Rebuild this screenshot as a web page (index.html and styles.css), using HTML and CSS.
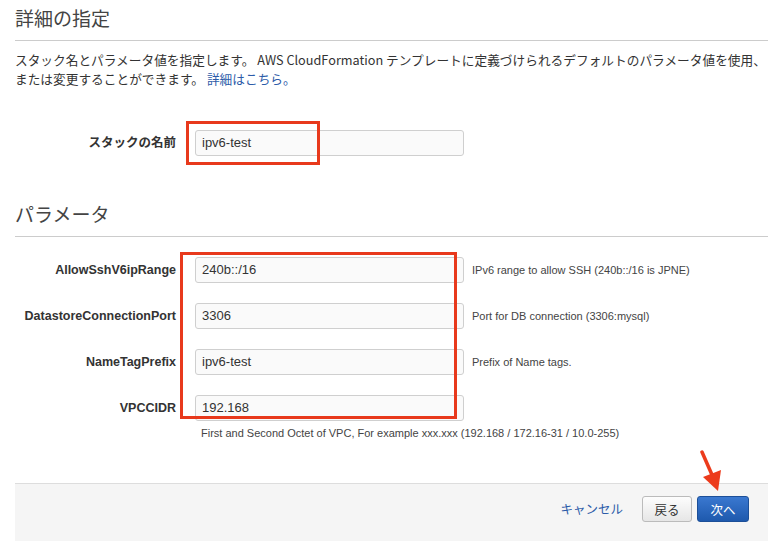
FILE: index.html
```html
<!DOCTYPE html>
<html lang="ja">
<head>
<meta charset="UTF-8">
<title>詳細の指定</title>
<link rel="stylesheet" href="styles.css">
</head>
<body>

<div class="page">

    <!-- 詳細の指定 -->
    <h1 class="section-title">詳細の指定</h1>
    <p class="desc">
        スタック名とパラメータ値を指定します。 AWS CloudFormation テンプレートに定義づけられるデフォルトのパラメータ値を使用、<br>
        または変更することができます。 <a href="#" class="link">詳細はこちら。</a>
    </p>

    <div class="field stack-field">
        <label class="label">スタックの名前</label>
        <input class="input" type="text" value="ipv6-test">
    </div>

    <!-- パラメータ -->
    <h2 class="section-title params-title">パラメータ</h2>

    <div class="params">
        <div class="field">
            <label class="label">AllowSshV6ipRange</label>
            <input class="input" type="text" value="240b::/16">
            <span class="help">IPv6 range to allow SSH (240b::/16 is JPNE)</span>
        </div>
        <div class="field">
            <label class="label">DatastoreConnectionPort</label>
            <input class="input" type="text" value="3306">
            <span class="help">Port for DB connection (3306:mysql)</span>
        </div>
        <div class="field">
            <label class="label">NameTagPrefix</label>
            <input class="input" type="text" value="ipv6-test">
            <span class="help">Prefix of Name tags.</span>
        </div>
        <div class="field">
            <label class="label">VPCCIDR</label>
            <input class="input" type="text" value="192.168">
            <span class="help help-below">First and Second Octet of VPC, For example xxx.xxx (192.168 / 172.16-31 / 10.0-255)</span>
        </div>
    </div>

    <div class="footer">
        <a href="#" class="cancel">キャンセル</a>
        <button class="btn">戻る</button>
        <button class="btn btn-primary">次へ</button>
    </div>

    <!-- 注釈 -->
    <div class="mark mark-stack"></div>
    <div class="mark mark-params"></div>
    <svg class="arrow" width="40" height="50" viewBox="0 0 40 50">
        <line x1="2" y1="2" x2="12.5" y2="26" stroke="#ec3b1c" stroke-width="3.5" stroke-linecap="round"/>
        <polygon points="3,27 21,20 18,41" fill="#ec3b1c"/>
    </svg>

</div>

</body>
</html>
```

FILE: styles.css
```css
body {
    margin: 0;
    font-family: 'Liberation Sans', 'Noto Sans CJK JP', sans-serif;
    background: #fff;
    color: #333;
    overflow: hidden;
}

.page {
    position: relative;
    padding-left: 15px;
    height: 541px;
}

.section-title {
    margin: 0;
    padding: 6px 0 10px;
    font-family: 'Noto Sans CJK JP', sans-serif;
    font-size: 19px;
    font-weight: normal;
    line-height: 24px;
    color: #444;
    border-bottom: 1px solid #ccc;
}

.desc {
    margin: 10px 0 0;
    font-family: 'Noto Sans CJK JP', sans-serif;
    font-size: 12.7px;
    line-height: 18.5px;
    color: #333;
    white-space: nowrap;
}

.link {
    color: #2c5ba8;
    text-decoration: none;
}

.field {
    display: grid;
    grid-template-columns: 161px 269px auto;
    column-gap: 19px;
    align-items: center;
}

.stack-field {
    margin-top: 42px;
}

.params-title {
    margin-top: 40px;
}

.params {
    display: flex;
    flex-direction: column;
    gap: 20px;
    margin-top: 20px;
}

.label {
    text-align: right;
    font-family: 'Liberation Sans', 'Noto Sans CJK JP', sans-serif;
    font-size: 12.5px;
    line-height: 16px;
    font-weight: bold;
    color: #333;
}

.input {
    height: 26px;
    box-sizing: border-box;
    margin: 0;
    padding: 0 6px 2px;
    border: 1px solid #cfcfcf;
    border-radius: 3px;
    background: #fafafa;
    font-family: 'Liberation Sans', sans-serif;
    font-size: 13px;
    color: #333;
}

.help {
    margin-left: -11px;
    font-size: 11px;
    line-height: 15px;
    color: #444;
}

.help-below {
    grid-column: 2 / 4;
    margin: 5px 0 0 6px;
}

.footer {
    display: flex;
    justify-content: flex-end;
    align-items: flex-start;
    gap: 5px;
    margin-top: 42px;
    padding: 12px 19px 0 0;
    height: 70px;
    box-sizing: border-box;
    background: #f5f5f5;
    border-top: 1px solid #ddd;
}

.cancel {
    margin-right: 14px;
    line-height: 26px;
    font-family: 'Noto Sans CJK JP', sans-serif;
    font-size: 12.5px;
    color: #2c5ba8;
    text-decoration: none;
}

.btn {
    height: 26px;
    width: 50px;
    padding: 0;
    border: 1px solid #bbb;
    border-radius: 3px;
    background: linear-gradient(#fdfdfd, #e6e6e6);
    font-family: 'Noto Sans CJK JP', sans-serif;
    font-size: 12.5px;
    color: #333;
}

.btn-primary {
    width: 52px;
    border-color: #1c4f98;
    background: linear-gradient(#3a78d0, #1e59ad);
    color: #fff;
}

.mark {
    position: absolute;
    border: 3px solid #e8391c;
    box-sizing: border-box;
}

.mark-stack {
    left: 186px;
    top: 121px;
    width: 134px;
    height: 44px;
}

.mark-params {
    left: 180px;
    top: 252px;
    width: 277px;
    height: 167px;
}

.arrow {
    position: absolute;
    left: 700px;
    top: 450px;
}
```
